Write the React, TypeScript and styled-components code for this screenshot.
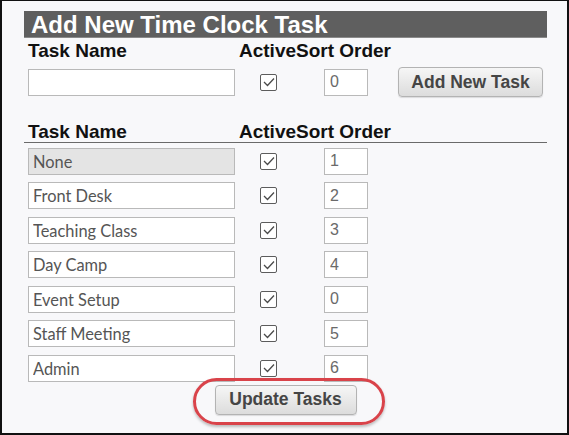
import React from "react";
import styled, { createGlobalStyle, css } from "styled-components";

const Global = createGlobalStyle`
  html, body { margin: 0; padding: 0; background: #ffffff; }
  *, *::before, *::after { box-sizing: border-box; }
`;

const Frame = styled.div`
  width: 569px;
  height: 435px;
  border: 1px solid #111;
  border-left-width: 2px;
  border-right-width: 2px;
  border-bottom-width: 2px;
  background: #f8f8fa;
  padding: 10px 20px 0 22px;
  font-family: "Liberation Sans", Arial, sans-serif;
`;

const TitleBar = styled.h2`
  margin: 0;
  height: 27px;
  background: #5f5f5f;
  border-bottom: 1px solid #8a8a8a;
  color: #fff;
  font-size: 24px;
  line-height: 27px;
  font-weight: 700;
  padding-left: 7px;
  white-space: nowrap;
`;

const cols = css`
  display: grid;
  grid-template-columns: 215px 57px 102px 1fr;
  align-items: center;
`;

const AddGrid = styled.div`
  ${cols};
  row-gap: 6px;
  margin-top: 3px;
`;

const HeadRow = styled.div`
  ${cols};
  align-items: end;
  margin-top: 25px;
  border-bottom: 1.5px solid #6a6a6a;
`;

const Label = styled.span<{ $pad?: number }>`
  font-size: 19px;
  line-height: 20px;
  font-weight: 700;
  color: #111;
  white-space: nowrap;
  padding-left: ${(p) => p.$pad ?? 0}px;
`;

const Rows = styled.div`
  display: flex;
  flex-direction: column;
  gap: 7.5px;
  margin-top: 4.5px;
`;

const Row = styled.div`
  ${cols};
`;

const NameInput = styled.input<{ $disabled?: boolean }>`
  margin-left: 4px;
  width: 207px;
  height: 27px;
  border: 1px solid #b9b9b9;
  border-radius: 0;
  background: ${(p) => (p.$disabled ? "#e4e4e4" : "#fff")};
  padding: 0 0 0 4px;
  font-family: Lato, "Open Sans", sans-serif;
  font-size: 16.4px;
  color: #555;
  outline: none;
`;

const SortInput = styled.input`
  margin-left: 28px;
  width: 44px;
  height: 27px;
  border: 1px solid #b9b9b9;
  border-radius: 0;
  background: #fff;
  padding: 0 0 0 5px;
  font-family: "Liberation Sans", Arial, sans-serif;
  font-size: 16px;
  color: #6a6a6a;
  outline: none;
`;

const CheckWrap = styled.label`
  display: inline-flex;
  margin-left: 21px;
  width: 17px;
  height: 17px;
  position: relative;
`;

const HiddenCheck = styled.input`
  position: absolute;
  opacity: 0;
  margin: 0;
  width: 100%;
  height: 100%;
`;

const Box = styled.span`
  width: 17px;
  height: 17px;
  border: 1.5px solid #5c5c5c;
  border-radius: 2px;
  background: #fff;
  display: flex;
  align-items: center;
  justify-content: center;
`;

const Button = styled.button<{ $w: number }>`
  width: ${(p) => p.$w}px;
  height: 30px;
  border: 1px solid #b3b3b3;
  border-radius: 4px;
  background: linear-gradient(#f6f6f6, #dcdcdc);
  box-shadow: 0 1px 1px rgba(0, 0, 0, 0.12);
  font-family: "Liberation Sans", Arial, sans-serif;
  font-weight: 700;
  font-size: 17.5px;
  color: #454545;
  padding: 0;
  cursor: pointer;
`;

const Footer = styled.div`
  display: flex;
  justify-content: center;
  margin-top: 3px;
`;

const Highlight = styled.div`
  position: relative;
  display: inline-flex;
`;

const Ring = styled.span`
  position: absolute;
  left: -22px;
  right: -28px;
  top: -7px;
  bottom: -10px;
  border: 3px solid #d9434a;
  border-radius: 26px;
  box-shadow: 0 2px 3px rgba(0, 0, 0, 0.25);
  pointer-events: none;
`;

function Check() {
  return (
    <CheckWrap>
      <HiddenCheck type="checkbox" defaultChecked />
      <Box>
        <svg width="12" height="10" viewBox="0 0 12 10" fill="none">
          <path d="M1 5 L4.5 8.5 L11 1.5" stroke="#4a4a4a" strokeWidth="1.3" />
        </svg>
      </Box>
    </CheckWrap>
  );
}

const tasks: { name: string; order: string; disabled?: boolean }[] = [
  { name: "None", order: "1", disabled: true },
  { name: "Front Desk", order: "2" },
  { name: "Teaching Class", order: "3" },
  { name: "Day Camp", order: "4" },
  { name: "Event Setup", order: "0" },
  { name: "Staff Meeting", order: "5" },
  { name: "Admin", order: "6" },
];

export default function App() {
  return (
    <>
      <Global />
      <Frame>
        <TitleBar>Add New Time Clock Task</TitleBar>
        <AddGrid>
          <Label $pad={4}>Task Name</Label>
          <Label>Active</Label>
          <Label>Sort Order</Label>
          <span />
          <NameInput defaultValue="" />
          <Check />
          <SortInput defaultValue="0" />
          <Button $w={145}>Add New Task</Button>
        </AddGrid>
        <HeadRow>
          <Label $pad={4}>Task Name</Label>
          <Label>Active</Label>
          <Label>Sort Order</Label>
          <span />
        </HeadRow>
        <Rows>
          {tasks.map((t) => (
            <Row key={t.name}>
              <NameInput
                $disabled={t.disabled}
                readOnly={t.disabled}
                defaultValue={t.name}
              />
              <Check />
              <SortInput defaultValue={t.order} />
              <span />
            </Row>
          ))}
        </Rows>
        <Footer>
          <Highlight>
            <Button $w={142}>Update Tasks</Button>
            <Ring />
          </Highlight>
        </Footer>
      </Frame>
    </>
  );
}
